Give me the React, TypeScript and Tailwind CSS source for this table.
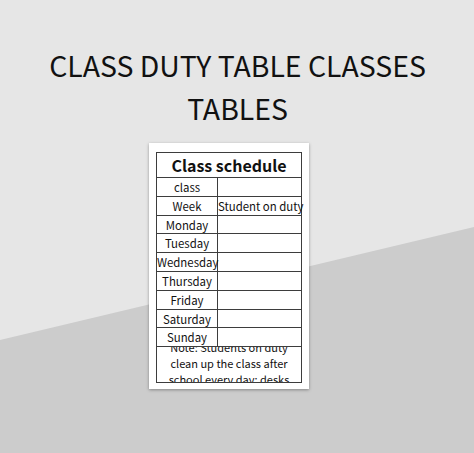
const days = ['Monday', 'Tuesday', 'Wednesday', 'Thursday', 'Friday', 'Saturday', 'Sunday']

function Row({ left, right }: { left: string; right?: string }) {
  return (
    <div className="flex h-[18.8px] border-b border-[#3d3d3d] leading-[18px]">
      <div className="w-[61px] shrink-0 border-r border-[#3d3d3d] text-center whitespace-nowrap">{left}</div>
      <div className="flex-1 text-center whitespace-nowrap">{right}</div>
    </div>
  )
}

export default function App() {
  return (
    <div
      className="relative w-[474px] h-[453px] overflow-hidden bg-[#e6e6e6] text-[#111]"
      style={{ fontFamily: '"Noto Sans CJK SC", "Noto Sans", sans-serif' }}
    >
      {/* lower diagonal panel */}
      <div className="absolute inset-0 bg-[#cccccc] [clip-path:polygon(0_340px,100%_227px,100%_100%,0_100%)]" />

      <div className="relative flex flex-col">
        <h1 className="ml-[1px] pt-[43px] text-center text-[28.4px] font-normal leading-[43px]">
          CLASS DUTY TABLE CLASSES
          <br />
          TABLES
        </h1>

        {/* document preview */}
        <div className="ml-[149px] mt-[14px] h-[246px] w-[160px] bg-white pl-[7px] pt-[9px] shadow-[0_1px_3px_rgba(0,0,0,0.35)]">
          <div className="w-[146px] border border-[#3d3d3d] text-[11.4px] text-[#111]">
            <div className="h-[25px] border-b border-[#3d3d3d] text-center text-[16px] font-bold leading-[24px]">
              Class schedule
            </div>
            <Row left="class" />
            <Row left="Week" right="Student on duty" />
            {days.map((d) => (
              <Row key={d} left={d} />
            ))}
            <div className="h-[35px] overflow-hidden text-center text-[11px] leading-[16px]">
              <p className="mt-[-8px] px-[9px]">
                Note: Students on duty clean up the class after school every day: desks and chairs
              </p>
            </div>
          </div>
        </div>
      </div>
    </div>
  )
}
